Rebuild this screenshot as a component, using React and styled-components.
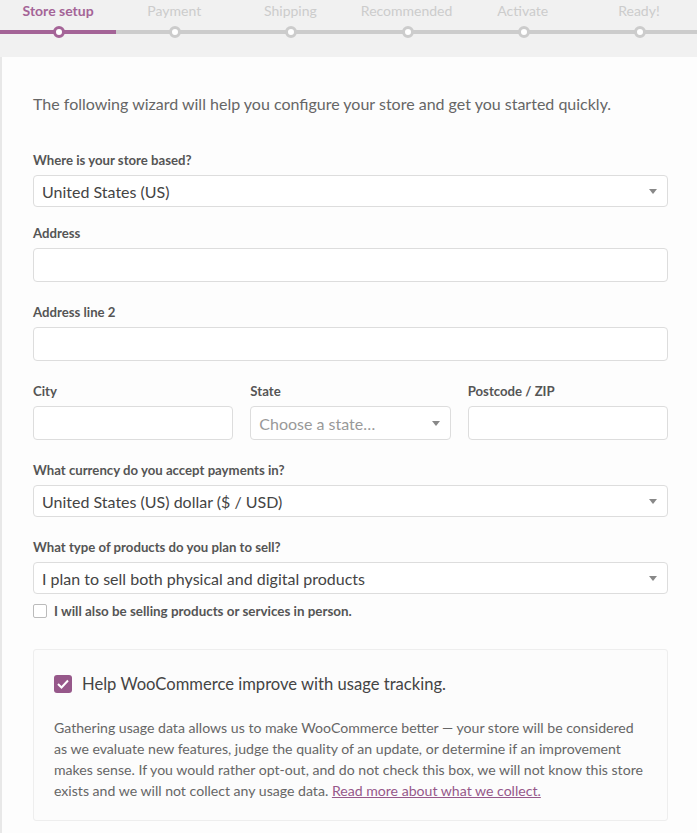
import React from 'react'
import styled, { createGlobalStyle } from 'styled-components'

const GlobalStyle = createGlobalStyle`
  body {
    margin: 0;
    background: #f1f1f1;
    font-family: Lato, "Noto Sans", sans-serif;
    color: #555;
  }
`

const steps = [`Store setup`, `Payment`, `Shipping`, `Recommended`, `Activate`, `Ready!`]

const Steps = styled.ol`
  display: flex;
  margin: 0;
  padding: 0;
  list-style: none;
  height: 57px;
`

const Step = styled.li`
  flex: 1;
  position: relative;
  text-align: center;
  font-size: 14px;
  font-weight: ${p => (p.active ? 700 : 400)};
  color: ${p => (p.active ? '#a46497' : '#ccc')};
  padding-top: 2px;
  border-bottom: 4px solid ${p => (p.active ? '#a46497' : '#ccc')};
  height: 28px;

  &::before {
    content: '';
    position: absolute;
    left: 50%;
    bottom: -8px;
    width: 6px;
    height: 6px;
    margin-left: -5px;
    border-radius: 50%;
    background: #fff;
    border: 3px solid ${p => (p.active ? '#a46497' : '#ccc')};
  }
`

const Card = styled.main`
  background: #fdfdfd;
  border-left: 2px solid #e8e8e8;
  padding: 35px 29px 20px 31px;
`

const Intro = styled.p`
  margin: 0 0 35px;
  font-size: 16px;
  line-height: 24px;
  color: #666;
`

const Field = styled.div`
  margin-bottom: ${p => (p.tight ? 17 : 21)}px;
`

const Label = styled.label`
  display: block;
  font-size: 13.2px;
  line-height: 18px;
  font-weight: 700;
  color: #555;
  margin-bottom: 6px;
`

const Input = styled.input`
  display: block;
  box-sizing: border-box;
  width: 100%;
  height: 34px;
  border: 1px solid #ddd;
  border-radius: 4px;
  background: #fff;
  font: inherit;
`

const SelectBox = styled.div`
  box-sizing: border-box;
  height: ${p => (p.tall ? 34 : 32)}px;
  border: 1px solid #ddd;
  border-radius: 4px;
  background: #fff;
  display: flex;
  align-items: center;
  justify-content: space-between;
  padding: 0 10px 0 8px;
  font-size: 16px;
  color: ${p => (p.placeholder ? '#999' : '#444')};

  &::after {
    content: '';
    border-left: 4px solid transparent;
    border-right: 4px solid transparent;
    border-top: 5px solid #888;
  }
`

const Row = styled.div`
  display: grid;
  grid-template-columns: repeat(3, 1fr);
  gap: 17px;
`

const CheckRow = styled.label`
  display: flex;
  align-items: center;
  gap: 7px;
  font-size: 13.4px;
  font-weight: 700;
  color: #555;
  margin-top: -12px;
`

const Box = styled.span`
  width: 12px;
  height: 12px;
  border: 1px solid #bbb;
  border-radius: 2px;
  background: #fff;
`

const Usage = styled.section`
  margin-top: 30px;
  border: 1px solid #eee;
  border-radius: 3px;
  background: #fcfcfc;
  padding: 23px 18px 19px 20px;
`

const UsageHead = styled.div`
  display: flex;
  align-items: center;
  gap: 10px;
  font-size: 16.6px;
  line-height: 22px;
  font-weight: 400;
  color: #444;
  margin-bottom: 22px;
`

const PurpleCheck = styled.span`
  width: 18px;
  height: 18px;
  border-radius: 3px;
  background: #96588a;
  display: flex;
  align-items: center;
  justify-content: center;
`

const UsageText = styled.p`
  margin: 0;
  font-size: 14.1px;
  line-height: 21px;
  color: #666;
`

const MoreLink = styled.a`
  color: #96588a;
  text-decoration: underline;
`

export default function App() {
  return (
    <>
      <GlobalStyle />
      <Steps>
        {steps.map((s, i) => (
          <Step key={s} active={i === 0}>{s}</Step>
        ))}
      </Steps>
      <Card>
        <Intro>The following wizard will help you configure your store and get you started quickly.</Intro>
        <Field tight>
          <Label>Where is your store based?</Label>
          <SelectBox>United States (US)</SelectBox>
        </Field>
        <Field>
          <Label>Address</Label>
          <Input />
        </Field>
        <Field>
          <Label>Address line 2</Label>
          <Input />
        </Field>
        <Row>
          <Field>
            <Label>City</Label>
            <Input />
          </Field>
          <Field>
            <Label>State</Label>
            <SelectBox placeholder tall>Choose a state…</SelectBox>
          </Field>
          <Field>
            <Label>Postcode / ZIP</Label>
            <Input />
          </Field>
        </Row>
        <Field>
          <Label>What currency do you accept payments in?</Label>
          <SelectBox>United States (US) dollar ($ / USD)</SelectBox>
        </Field>
        <Field>
          <Label>What type of products do you plan to sell?</Label>
          <SelectBox>I plan to sell both physical and digital products</SelectBox>
        </Field>
        <CheckRow>
          <Box />
          I will also be selling products or services in person.
        </CheckRow>
        <Usage>
          <UsageHead>
            <PurpleCheck>
              <svg width="12" height="10" viewBox="0 0 12 10">
                <path d="M1 5l3.5 3.5L11 1.5" fill="none" stroke="#fff" strokeWidth="2" />
              </svg>
            </PurpleCheck>
            Help WooCommerce improve with usage tracking.
          </UsageHead>
          <UsageText>
            Gathering usage data allows us to make WooCommerce better — your store will be considered as we evaluate new features, judge the quality of an update, or determine if an improvement makes sense. If you would rather opt-out, and do not check this box, we will not know this store exists and we will not collect any usage data.{' '}
            <MoreLink href="#">Read more about what we collect.</MoreLink>
          </UsageText>
        </Usage>
      </Card>
    </>
  )
}
